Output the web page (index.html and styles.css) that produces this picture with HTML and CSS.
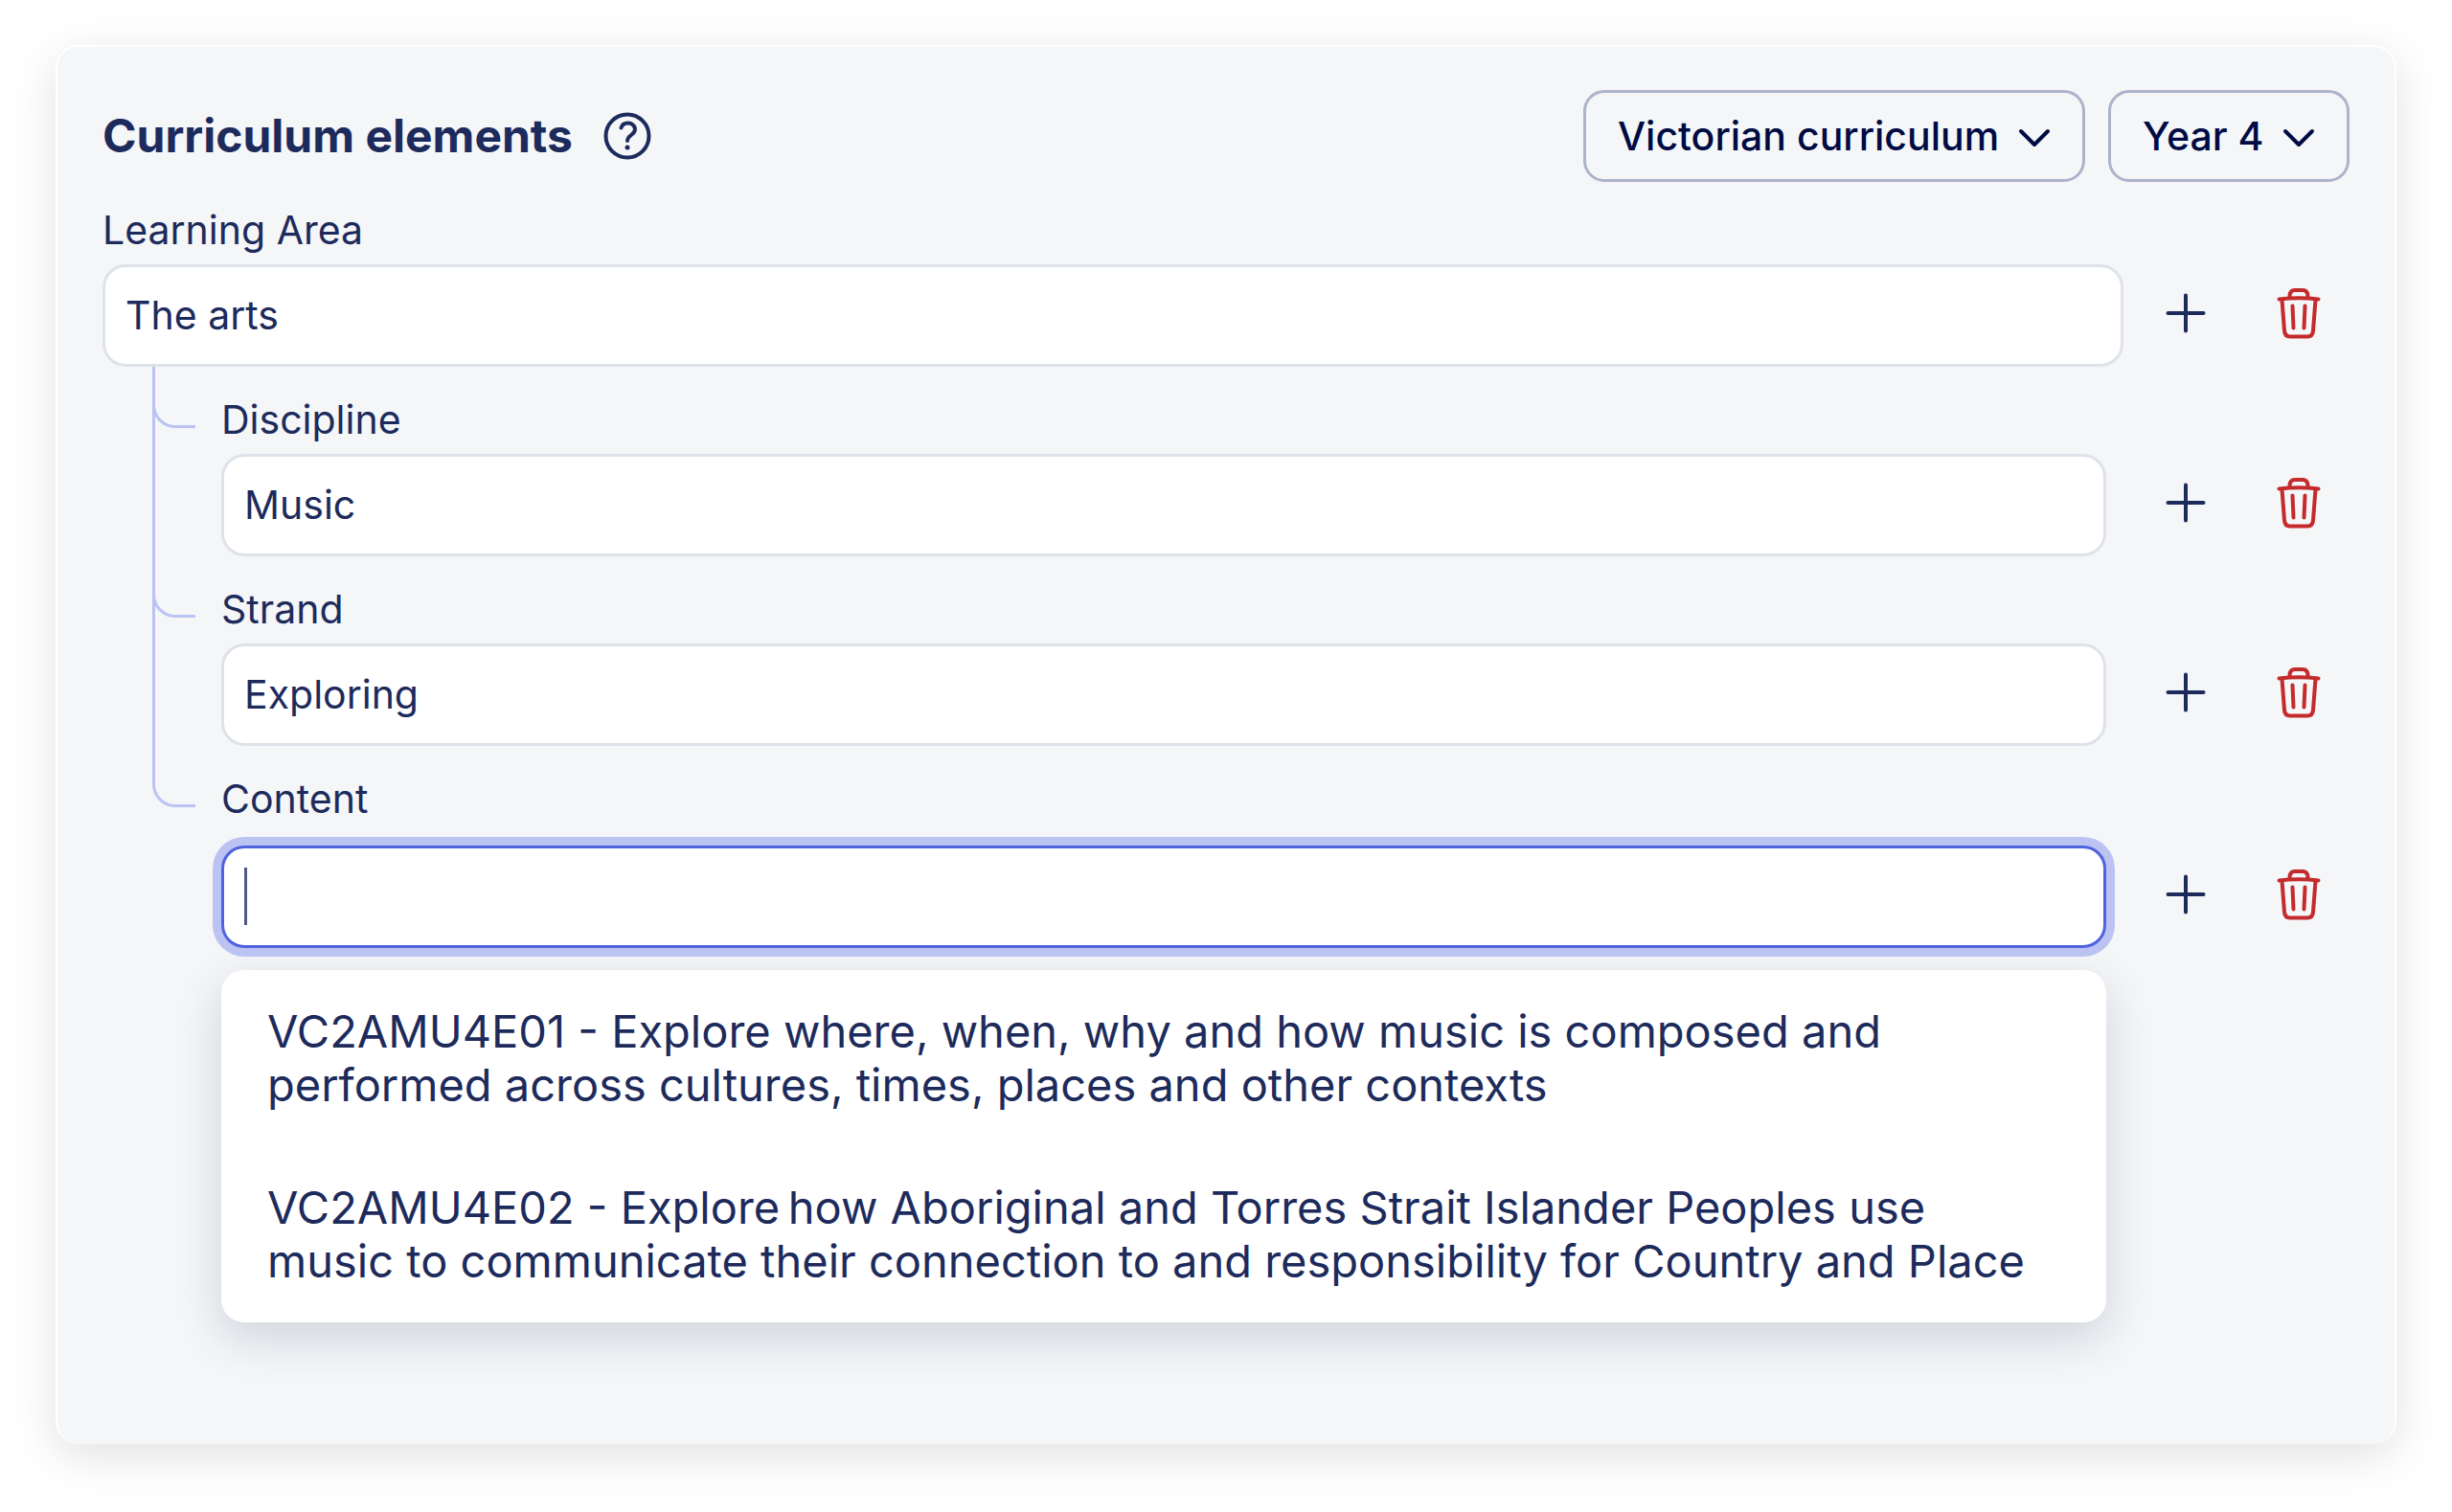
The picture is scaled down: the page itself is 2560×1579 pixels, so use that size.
FILE: index.html
```html
<!DOCTYPE html>
<html lang="en">
<head>
    <meta charset="UTF-8">
    <title>Curriculum elements</title>
    <link rel="stylesheet" href="styles.css">
</head>

<body>
    <!-- shared icons -->
    <svg class="sprite" aria-hidden="true">
        <symbol id="icon-plus" viewBox="0 0 48 56">
            <path d="M24 9.5v37M5.5 28h37"/>
        </symbol>
        <symbol id="icon-trash" viewBox="0 0 48 56">
            <path d="M3.500 13.500Q24 11 44.500 13.500"/>
            <path d="M14.500 12V10.500Q14.500 4 20 4H28Q33.500 4 33.500 10.500V12"/>
            <path d="M6.500 14L9 46.500Q9.500 52.500 15 52.500H33Q38.500 52.500 39 46.500L41.500 14"/>
            <path d="M17.500 20.500L18.500 43.500M30.500 20.500L29.500 43.500"/>
        </symbol>
        <symbol id="icon-chevron" viewBox="0 0 36 24">
            <path d="M4 5L18 19L32 5"/>
        </symbol>
    </svg>

    <main class="card">
        <header class="card-header">
            <h1>Curriculum elements</h1>
            <button class="help" type="button" aria-label="Help">
                <svg viewBox="0 0 50 50">
                    <circle cx="25" cy="25" r="22.500"/>
                    <path d="M18.500 16.500C19.500 13 22 11.500 25.500 11.500C30 11.500 33 14.500 33 18C33 24 25 24 25 30"/>
                    <circle class="dot" cx="25" cy="37" r="2.500"/>
                </svg>
            </button>
            <div class="filters">
                <div class="select">
                    <select aria-label="Curriculum">
                        <option>Victorian curriculum</option>
                    </select>
                    <svg><use href="#icon-chevron"/></svg>
                </div>
                <div class="select">
                    <select aria-label="Year level">
                        <option>Year 4</option>
                    </select>
                    <svg><use href="#icon-chevron"/></svg>
                </div>
            </div>
        </header>

        <div class="row">
            <label for="area">Learning Area</label>
            <div class="line">
                <input type="text" id="area" value="The arts">
                <div class="actions">
                    <button class="add" type="button" aria-label="Add learning area"><svg><use href="#icon-plus"/></svg></button>
                    <button class="delete" type="button" aria-label="Delete learning area"><svg><use href="#icon-trash"/></svg></button>
                </div>
            </div>
        </div>

        <ul class="tree">
            <li class="row">
                <label for="discipline">Discipline</label>
                <div class="line">
                    <input type="text" id="discipline" value="Music">
                    <div class="actions">
                        <button class="add" type="button" aria-label="Add discipline"><svg><use href="#icon-plus"/></svg></button>
                        <button class="delete" type="button" aria-label="Delete discipline"><svg><use href="#icon-trash"/></svg></button>
                    </div>
                </div>
            </li>
            <li class="row">
                <label for="strand">Strand</label>
                <div class="line">
                    <input type="text" id="strand" value="Exploring">
                    <div class="actions">
                        <button class="add" type="button" aria-label="Add strand"><svg><use href="#icon-plus"/></svg></button>
                        <button class="delete" type="button" aria-label="Delete strand"><svg><use href="#icon-trash"/></svg></button>
                    </div>
                </div>
            </li>
            <li class="row editing">
                <label for="content">Content</label>
                <div class="line">
                    <div class="combo">
                        <input type="text" id="content" aria-controls="suggestions">
                        <span class="caret"></span>
                    </div>
                    <div class="actions">
                        <button class="add" type="button" aria-label="Add content"><svg><use href="#icon-plus"/></svg></button>
                        <button class="delete" type="button" aria-label="Delete content"><svg><use href="#icon-trash"/></svg></button>
                    </div>
                </div>
                <ul class="suggestions" id="suggestions">
                    <li>VC2AMU4E01 - Explore where, when, why and how music is composed and performed across cultures, times, places and other contexts</li>
                    <li>VC2AMU4E02 - Explore&thinsp;how Aboriginal and Torres Strait Islander Peoples use music to communicate their connection to and responsibility for Country and Place</li>
                </ul>
            </li>
        </ul>
    </main>
</body>

</html>
```

FILE: styles.css
```css
* {
    box-sizing: border-box;
}

body {
    margin: 0;
    padding: 47px 58px 70px;
    background: #fff;
    color: #1d2b5c;
    font-family: Inter, "Liberation Sans", sans-serif;
    font-size: 41px;
    line-height: 50px;
}

ul,
li {
    list-style: none;
    margin: 0;
    padding: 0;
}

button,
input,
select {
    font: inherit;
    color: inherit;
    outline: none;
}

button {
    padding: 0;
    border: 0;
    background: none;
    cursor: pointer;
}

svg {
    display: block;
    fill: none;
    stroke: currentColor;
    stroke-width: 4;
    stroke-linecap: round;
    stroke-linejoin: round;
}

.sprite {
    position: absolute;
    width: 0;
    height: 0;
}

.card {
    padding: 45px 47px 127px;
    border: 2px solid #fff;
    border-bottom: 0;
    border-radius: 24px;
    background: #f4f6f8;
    box-shadow: 0 12px 48px rgba(0, 0, 0, 0.12);
}

/* header */
.card-header {
    display: flex;
    align-items: center;
    margin-bottom: 25px;
}

h1 {
    margin: 0;
    font-size: 48px;
    font-weight: 700;
    line-height: 56px;
}

.help {
    margin-left: 32px;
}

.help svg {
    width: 50px;
    height: 50px;
}

.help .dot {
    fill: currentColor;
    stroke: none;
}

.filters {
    display: flex;
    gap: 24px;
    margin-left: auto;
}

.select {
    position: relative;
    color: #000b43;
}

.select select {
    appearance: none;
    height: 96px;
    padding: 0 86px 0 33px;
    border: 3px solid #acb3ca;
    border-radius: 22px;
    background: none;
    font-weight: 500;
}

.select svg {
    position: absolute;
    top: 38px;
    right: 35px;
    width: 36px;
    height: 24px;
    pointer-events: none;
}

/* fields */
.row label {
    display: block;
    margin-bottom: 11px;
}

.line {
    display: flex;
    gap: 12px;
}

input {
    flex: 1;
    min-width: 0;
    width: 100%;
    height: 107px;
    padding: 0 21px 2px;
    border: 3px solid #dfe2e9;
    border-radius: 24px;
    background: #fff;
}

.actions {
    display: flex;
    gap: 12px;
    padding-bottom: 6px;
}

.actions button {
    width: 106px;
}

.actions svg {
    width: 48px;
    height: 56px;
    margin: 0 auto;
}

.delete {
    color: #c52a2c;
}

/* tree */
.tree {
    padding-left: 124px;
}

.tree .row {
    position: relative;
    padding-top: 30px;
}

.tree .line {
    gap: 30px;
}

.tree .row::before,
.tree .row::after {
    content: "";
    position: absolute;
    top: 0;
    left: -72px;
    border-left: 3px solid #bbc3f3;
}

/* elbow */
.tree .row::before {
    width: 42px;
    height: 61px;
    border-bottom: 3px solid #bbc3f3;
    border-bottom-left-radius: 24px;
}

/* trunk down to the next row */
.tree .row::after {
    height: 100%;
}

.tree .row:last-child::after {
    display: none;
}

.editing .line {
    margin-top: 24px;
}

.combo {
    position: relative;
    flex: 1;
}

.combo input {
    display: block;
    border-color: #4f63df;
    box-shadow: 0 0 0 9px #bbc3f3;
}

.caret {
    position: absolute;
    top: 23px;
    left: 24px;
    width: 3px;
    height: 60px;
    background: #4f5a83;
}

.suggestions {
    margin: 23px 254px 0 0;
    border-radius: 24px;
    background: #fff;
    box-shadow: 0 16px 48px rgba(20, 30, 70, 0.16);
    font-size: 47px;
    line-height: 56px;
}

.suggestions li {
    padding: 36px 48px;
}
```
